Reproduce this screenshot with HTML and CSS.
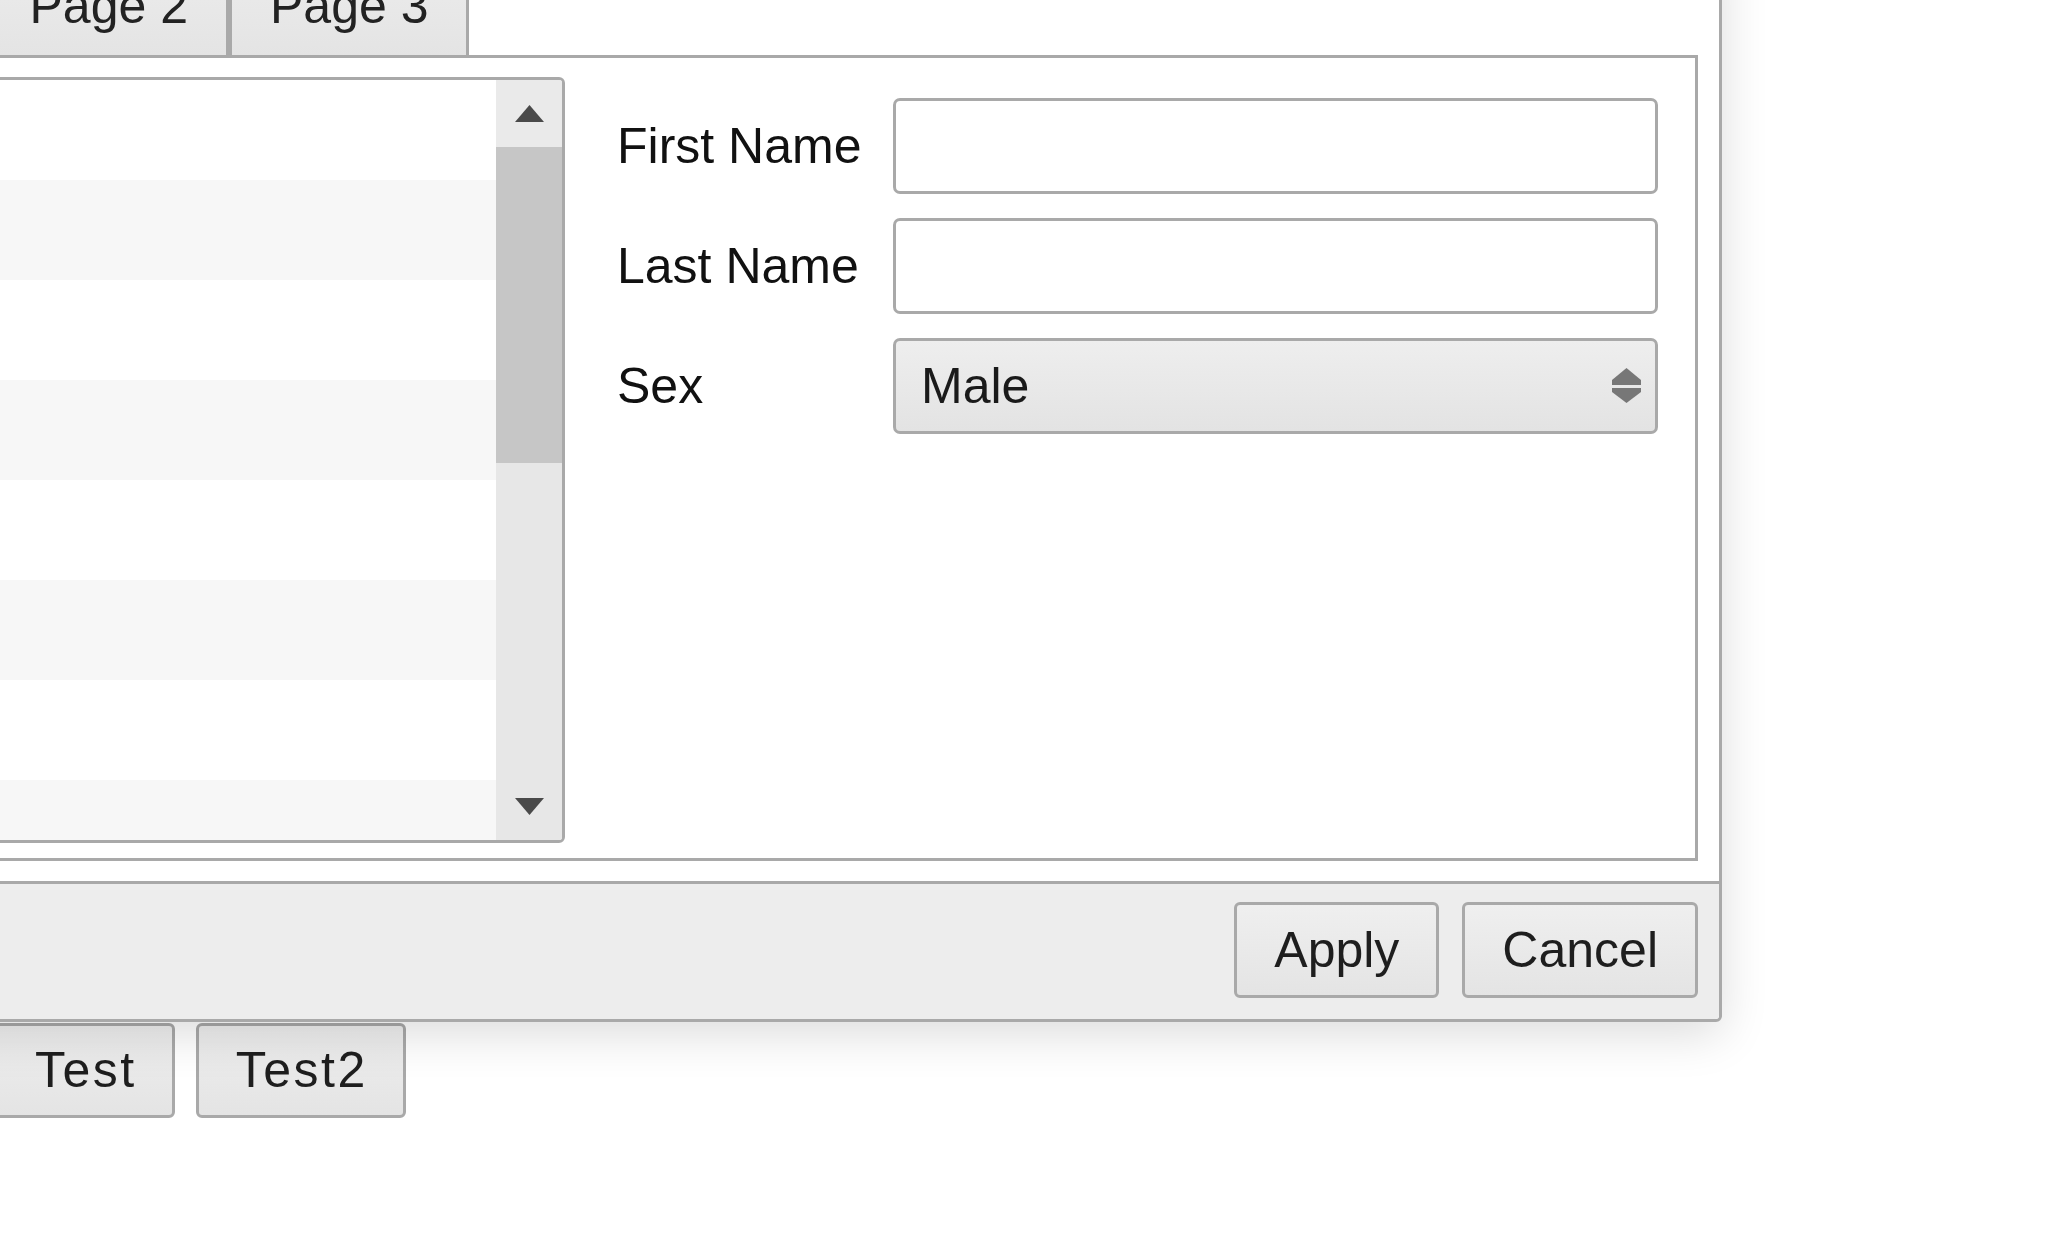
FILE: index.html
```html
<!DOCTYPE html>
<html lang="en">
<head>
<meta charset="utf-8">
<title>Dialog</title>
<link rel="stylesheet" href="styles.css">
</head>
<body>
<div class="dialog">
  <div class="dlg-main">
    <div class="tabs">
      <div class="tab active">Page 1</div>
      <div class="tab">Page 2</div>
      <div class="tab">Page 3</div>
    </div>
    <div class="panel">
      <div class="listbox">
        <div class="rows">
          <div class="row"></div>
          <div class="row"></div>
          <div class="row"></div>
          <div class="row"></div>
          <div class="row"></div>
          <div class="row"></div>
          <div class="row"></div>
          <div class="row"></div>
        </div>
        <div class="scrollbar">
          <div class="sb-btn">
            <svg width="29" height="17" viewBox="0 0 29 17"><polygon points="14.5,0 29,17 0,17" fill="#4a4a4a"/></svg>
          </div>
          <div class="sb-track"><div class="sb-thumb"></div></div>
          <div class="sb-btn">
            <svg width="29" height="17" viewBox="0 0 29 17"><polygon points="0,0 29,0 14.5,17" fill="#4a4a4a"/></svg>
          </div>
        </div>
      </div>
      <form class="form">
        <label class="lbl" for="fn">First Name</label>
        <input class="field" id="fn" type="text">
        <label class="lbl" for="ln">Last Name</label>
        <input class="field" id="ln" type="text">
        <label class="lbl" for="sx">Sex</label>
        <div class="select-wrap">
          <select class="select" id="sx">
            <option>Male</option>
            <option>Female</option>
          </select>
          <svg class="sel-arrows" width="29" height="35" viewBox="0 0 29 35"><polygon points="14.5,0 29,12 29,17 0,17 0,12" fill="#777"/><polygon points="0,20 29,20 29,24 14.5,35 0,24" fill="#777"/></svg>
        </div>
      </form>
    </div>
  </div>
  <div class="footer">
    <button class="btn" type="button">Apply</button>
    <button class="btn" type="button">Cancel</button>
  </div>
</div>
<div class="page-buttons">
  <button class="btn" type="button">Test</button>
  <button class="btn" type="button">Test2</button>
</div>
</body>
</html>
```

FILE: styles.css
```css
html, body {
  margin: 0;
  padding: 0;
  overflow: hidden;
  background: #fff;
}
body {
  width: 2046px;
  height: 1240px;
  font-family: "Liberation Sans", Arial, sans-serif;
  font-size: 50px;
  line-height: 56px;
  color: #1a1a1a;
}

.dialog {
  position: relative;
  z-index: 1;
  box-sizing: border-box;
  width: 2022px;
  margin-left: -300px;
  margin-top: -60px;
  border: 3px solid #a9a9a9;
  border-radius: 0 0 6px 6px;
  background: #fff;
  box-shadow: 0 12px 48px rgba(0, 0, 0, 0.14);
}

.dlg-main {
  padding: 20px 21px 20px 21px;
}

.tabs {
  display: flex;
  margin-left: 24px;
}
.tab {
  box-sizing: border-box;
  height: 92px;
  padding: 12px 38px 0;
  border: 3px solid #a9a9a9;
  border-bottom: 0;
  border-radius: 6px 6px 0 0;
  background: linear-gradient(#ececec, #e4e4e4);
  color: #222;
  white-space: nowrap;
}
.tab.active {
  background: #fff;
}

.panel {
  display: flex;
  align-items: flex-start;
  box-sizing: border-box;
  height: 806px;
  padding: 19px 37px 15px 18px;
  border: 3px solid #a9a9a9;
  background: #fff;
}

.listbox {
  display: flex;
  box-sizing: border-box;
  width: 820px;
  height: 766px;
  border: 3px solid #a9a9a9;
  border-radius: 6px;
  overflow: hidden;
  background: #fff;
}
.rows {
  flex: 1;
  overflow: hidden;
}
.row {
  height: 100px;
}
.row:nth-child(even) {
  background: #f7f7f7;
}

.scrollbar {
  display: flex;
  flex-direction: column;
  width: 66px;
  background: #e7e7e7;
}
.sb-btn {
  display: flex;
  align-items: center;
  justify-content: center;
  height: 67px;
  background: #eaeaea;
}
.sb-btn:last-child {
  background: #e7e7e7;
}
.sb-track {
  flex: 1;
}
.sb-thumb {
  height: 316px;
  background: #c6c6c6;
}

.form {
  flex: 1;
  display: grid;
  grid-template-columns: 276px 1fr;
  row-gap: 24px;
  align-items: center;
  margin: 0 0 0 52px;
  padding-top: 21px;
}
.lbl {
  color: #111;
  white-space: nowrap;
}
.field {
  box-sizing: border-box;
  width: 100%;
  height: 96px;
  margin: 0;
  padding: 0 25px;
  border: 3px solid #a9a9a9;
  border-radius: 7px;
  background: #fff;
  font: inherit;
  color: #1a1a1a;
  outline: none;
}

.select-wrap {
  position: relative;
}
.select {
  appearance: none;
  -webkit-appearance: none;
  box-sizing: border-box;
  width: 100%;
  height: 96px;
  margin: 0;
  padding: 0 60px 0 25px;
  border: 3px solid #a9a9a9;
  border-radius: 7px;
  background: linear-gradient(#eeeeee, #e3e3e3);
  font: inherit;
  color: #1a1a1a;
  outline: none;
}
.sel-arrows {
  position: absolute;
  right: 17px;
  top: 30px;
  pointer-events: none;
}

.footer {
  display: flex;
  justify-content: flex-end;
  gap: 23px;
  padding: 18px 21px 21px;
  border-top: 3px solid #a9a9a9;
  border-radius: 0 0 4px 4px;
  background: #ededed;
}

.btn {
  box-sizing: border-box;
  height: 96px;
  margin: 0;
  padding: 17px 37px;
  border: 3px solid #a9a9a9;
  border-radius: 6px;
  background: linear-gradient(#efefef, #e4e4e4);
  font: inherit;
  line-height: 56px;
  color: #1e1e1e;
  white-space: nowrap;
}

.page-buttons {
  display: flex;
  gap: 21px;
  margin-top: 1px;
  margin-left: -5px;
}
.page-buttons .btn {
  height: 95px;
  padding: 16px 35px 17px 37px;
  letter-spacing: 2.5px;
}
```
